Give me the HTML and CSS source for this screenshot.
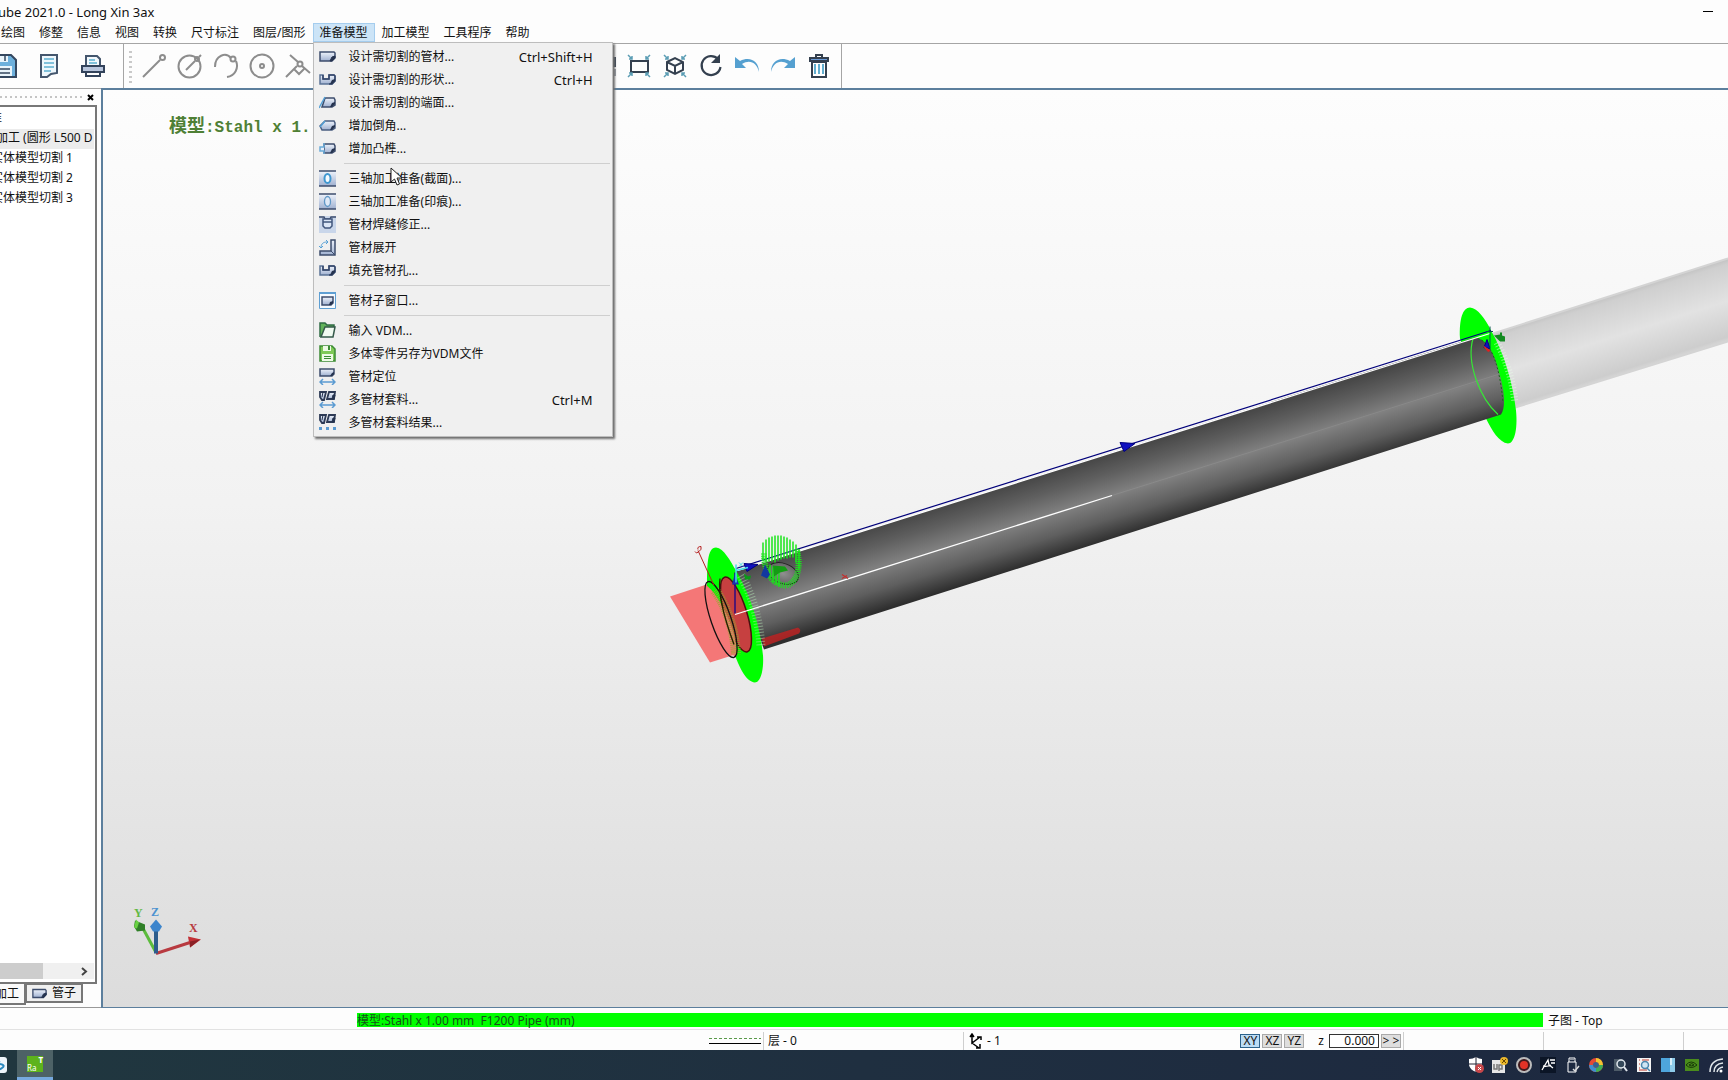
FILE: index.html
```html
<!DOCTYPE html>
<html lang="zh-CN">
<head>
<meta charset="utf-8">
<title>Tube 2021.0 - Long Xin 3ax</title>
<link rel="stylesheet" href="styles.css">
</head>
<body>
<svg class="defs" aria-hidden="true">
  <defs>
    <linearGradient id="steel" x1="0" y1="0" x2="0" y2="1"><stop offset="0" stop-color="#eef3fb"/><stop offset="1" stop-color="#9fb0d0"/></linearGradient>
    <symbol id="pipe" viewBox="0 0 17 17"><path d="M1 4h14l1 1v5l-3 3H1z" fill="url(#steel)" stroke="#3c4c6c" stroke-width="1.5"/><path d="M11 13l2-4 3-1v2l-3 3z" fill="#25334f" stroke="#25334f"/></symbol>
    <symbol id="shape" viewBox="0 0 17 17"><path d="M1 4h3v4h6V4h5l1 1v5l-3 3H1z" fill="url(#steel)" stroke="#5b7396" stroke-width="1.5"/><path d="M4 4v4h6V4h5l1 1v5l-3 3h-3" fill="none" stroke="#35466a" stroke-width="1.5"/><path d="M11 13l2-4 3-1v2l-3 3z" fill="#25334f"/></symbol>
    <symbol id="face" viewBox="0 0 17 17"><path d="M6 4h9l1 2v5l-3 2H3z" fill="url(#steel)" stroke="#3c4c6c" stroke-width="1.5"/><path d="M0 14L6 3" stroke="#55a0d5" stroke-width="1.5"/><path d="M11 13l2-4 3-1v2l-3 3z" fill="#25334f"/></symbol>
    <symbol id="chamfer" viewBox="0 0 17 17"><path d="M1 9l5-5h9l1 2v5l-3 2H3z" fill="url(#steel)" stroke="#4a5d80" stroke-width="1.5"/><path d="M1 10l5-6" stroke="#55a0d5" stroke-width="1.5"/><path d="M11 13l2-4 3-1v2l-3 3z" fill="#25334f"/></symbol>
    <symbol id="tenon" viewBox="0 0 17 17"><path d="M5 4h10l1 2v5l-3 2H5z" fill="url(#steel)" stroke="#3c4c6c" stroke-width="1.5"/><path d="M5 3v4H1v4h4v3" fill="#e4eefb" stroke="#6aaad8" stroke-width="1.5"/><path d="M11 13l2-4 3-1v2l-3 3z" fill="#25334f"/></symbol>
    <symbol id="section" viewBox="0 0 17 17"><path d="M0 1h17v15H0z" fill="url(#steel)"/><path d="M0 1h17M0 16h17" stroke="#3c4c6c" stroke-width="1.5"/><ellipse cx="8.500" cy="8.500" rx="3" ry="4.500" fill="#f4faff" stroke="#3f97d0" stroke-width="2"/></symbol>
    <symbol id="imprint" viewBox="0 0 17 17"><path d="M0 1h17v15H0z" fill="url(#steel)"/><path d="M0 1h17M0 16h17" stroke="#3c4c6c" stroke-width="1.500"/><ellipse cx="8.500" cy="8.500" rx="3" ry="5" fill="#dfe9f7" stroke="#5f97c6" stroke-width="1.300"/></symbol>
    <symbol id="weld" viewBox="0 0 17 17"><path d="M0 0h17v17H0z" fill="#c9d6ea"/><path d="M0 1h5l1 2h5l1-2h5" fill="none" stroke="#3c4c6c" stroke-width="1.500"/><path d="M4 3h9v7l-2 2H6l-2-2z" fill="#dbe6f6" stroke="#41577d" stroke-width="1.500"/><path d="M4 6h9" stroke="#41577d" stroke-width="1.500"/></symbol>
    <symbol id="unfold" viewBox="0 0 17 17"><path d="M12 1h4v15H1v-4h11z" fill="url(#steel)" stroke="#3c4c6c" stroke-width="1.500"/><path d="M12 12l4 4" stroke="#3c4c6c"/><path d="M2 9c0-4 2-6 6-6M0 7l2 2 2-2M7 1l2 2-2 2" fill="none" stroke="#55a0d5"/></symbol>
    <symbol id="subwin" viewBox="0 0 17 17"><path d="M.5.5h16v16H.5z" fill="#f5faff" stroke="#5e9fd3"/><path d="M0 0h17v2H0z" fill="#5e9fd3"/><path d="M3 5h11v6l-2 2H3z" fill="url(#steel)" stroke="#3c4c6c" stroke-width="1.500"/><path d="M10 13l1-3 3-1v2l-2 2z" fill="#25334f"/></symbol>
    <symbol id="folder" viewBox="0 0 17 17"><path d="M1 15V1h5l2 2h7v3" fill="#62b35a" stroke="#2f6b44" stroke-width="1.500"/><path d="M2 15L6 5h10l-2 10z" fill="#f1faf1" stroke="#35594a" stroke-width="1.500"/></symbol>
    <symbol id="vsave" viewBox="0 0 17 17"><path d="M1 1h12l3 3v12H1z" fill="#7fc957" stroke="#3c8b34" stroke-width="1.500"/><path d="M4 1h8v5H4zM3 9h11v7H3z" fill="#eefae6"/><path d="M9 1h2v4H9zM5 11h7v1H5zM5 13h7v1H5z" fill="#3c8b34"/></symbol>
    <symbol id="locate" viewBox="0 0 17 17"><path d="M1 1h14v5l-2 2H1z" fill="url(#steel)" stroke="#3c4c6c" stroke-width="1.500"/><path d="M11 8l2-3 2-1v2l-2 2z" fill="#25334f"/><path d="M1 14h15M4 11l-3 3 3 3M13 11l3 3-3 3" fill="none" stroke="#5b9bd2" stroke-width="1.500"/></symbol>
    <symbol id="pair" viewBox="0 0 17 10"><path d="M1 1h6L5 9H3L1 6zM10 1h6l-1 7H8z" fill="url(#steel)" stroke="#2d3a55" stroke-width="1.800"/><path d="M4 1L3 6M13 8l1-4h2l-1 4z" fill="#25334f" stroke="#25334f"/></symbol>
    <symbol id="nest" viewBox="0 0 17 17"><use href="#pair" width="17" height="10"/><path d="M1 14h15M4 11l-3 3 3 3M13 11l3 3-3 3" fill="none" stroke="#5b9bd2" stroke-width="1.500"/></symbol>
    <symbol id="nestres" viewBox="0 0 17 17"><use href="#pair" width="17" height="10"/><path d="M0 13h3v3H0zM7 13h3v3H7zM14 13h3v3h-3z" fill="#5b9bd2"/></symbol>
  </defs>
</svg>

<header class="titlebar">
  <span class="title">ube 2021.0 - Long Xin 3ax</span>
  <button class="minimize" aria-label="最小化"></button>
</header>

<nav class="menubar">
  <button>绘图</button><button>修整</button><button>信息</button><button>视图</button><button>转换</button><button>尺寸标注</button><button>图层/图形</button>
  <div class="menu-host">
    <button class="open" aria-expanded="true">准备模型</button>
    <div class="dropdown" role="menu">
      <button role="menuitem"><svg><use href="#pipe"/></svg><span>设计需切割的管材...</span><kbd>Ctrl+Shift+H</kbd></button>
      <button role="menuitem"><svg><use href="#shape"/></svg><span>设计需切割的形状...</span><kbd>Ctrl+H</kbd></button>
      <button role="menuitem"><svg><use href="#face"/></svg><span>设计需切割的端面...</span></button>
      <button role="menuitem"><svg><use href="#chamfer"/></svg><span>增加倒角...</span></button>
      <button role="menuitem"><svg><use href="#tenon"/></svg><span>增加凸榫...</span></button>
      <hr>
      <button role="menuitem"><svg><use href="#section"/></svg><span>三轴加工准备(截面)...</span></button>
      <button role="menuitem"><svg><use href="#imprint"/></svg><span>三轴加工准备(印痕)...</span></button>
      <button role="menuitem"><svg><use href="#weld"/></svg><span>管材焊缝修正...</span></button>
      <button role="menuitem"><svg><use href="#unfold"/></svg><span>管材展开</span></button>
      <button role="menuitem"><svg><use href="#shape"/></svg><span>填充管材孔...</span></button>
      <hr>
      <button role="menuitem"><svg><use href="#subwin"/></svg><span>管材子窗口...</span></button>
      <hr>
      <button role="menuitem"><svg><use href="#folder"/></svg><span>输入 VDM...</span></button>
      <button role="menuitem"><svg><use href="#vsave"/></svg><span>多体零件另存为VDM文件</span></button>
      <button role="menuitem"><svg><use href="#locate"/></svg><span>管材定位</span></button>
      <button role="menuitem"><svg><use href="#nest"/></svg><span>多管材套料...</span><kbd>Ctrl+M</kbd></button>
      <button role="menuitem"><svg><use href="#nestres"/></svg><span>多管材套料结果...</span></button>
      <svg class="cursor" viewBox="0 0 13 19"><path d="M1 1v14l3.500-3 2.500 6 2.500-1L7 11h5z" fill="#fff" stroke="#222"/></svg>
    </div>
  </div>
  <button>加工模型</button><button>工具程序</button><button>帮助</button>
</nav>

<div class="toolbar">
  <div class="tools files">
    <button aria-label="保存"><svg viewBox="0 0 26 26"><path d="M2 2h17l5 5v17H2z" fill="#6db0dc" stroke="#34475f" stroke-width="2"/><path d="M7 3h9v6H7zM5 13h15v10H5z" fill="#e9f4fb"/><path d="M13 3v5M7 16h11M7 20h11" stroke="#34475f" stroke-width="1.500"/></svg></button>
    <button aria-label="文档"><svg viewBox="0 0 26 26"><path d="M5 2h16v18l-6 1-4 3H5z" fill="#eef7fc" stroke="#44566d" stroke-width="2"/><path d="M8 6h10M8 10h10M8 14h10M8 18h7" stroke="#5eb0d0" stroke-width="1.500"/></svg></button>
    <button aria-label="打印"><svg viewBox="0 0 26 26"><path d="M6 13V3h11l3 3v7" fill="#f2f8fc" stroke="#44566d" stroke-width="2"/><path d="M9 7h6M9 10h8" stroke="#5eb0d0" stroke-width="1.500"/><path d="M2 13h22v6H2z" fill="#b9c6dd" stroke="#33435b" stroke-width="2"/><path d="M6 19h14v4H6z" fill="#fff" stroke="#33435b" stroke-width="2"/></svg></button>
  </div>
  <div class="grip"></div>
  <div class="tools draw">
    <button aria-label="直线"><svg viewBox="0 0 26 26"><path d="M2 24L19 7"/><circle cx="21.500" cy="4.500" r="2.500"/></svg></button>
    <button aria-label="圆"><svg viewBox="0 0 26 26"><circle cx="12.500" cy="13.500" r="11"/><path d="M9 17l9-9"/><circle cx="20" cy="6" r="2"/><path d="M22 4l2-2"/></svg></button>
    <button aria-label="圆弧"><svg viewBox="0 0 26 26"><path d="M2 14C2 2 13-1 18 5M23 8c3 7-1 15-9 16"/><circle cx="20" cy="6" r="2.500"/></svg></button>
    <button aria-label="圆心"><svg viewBox="0 0 26 26"><circle cx="13" cy="13" r="11.500"/><circle cx="13" cy="13" r="2"/></svg></button>
    <button aria-label="垂足"><svg viewBox="0 0 26 26"><path d="M5 2l8 7M17 13l8 7M1 24l11-11M9 16l5 5 5-5"/><circle cx="15" cy="11" r="2.500"/></svg></button>
  </div>
  <div class="tools view">
    <button aria-label="视图"><svg viewBox="0 0 26 26"><path d="M3 4h23v10H3z" fill="#34404f"/><path d="M25 16v7" stroke="#34404f"/></svg></button>
    <button aria-label="全部缩放"><svg viewBox="0 0 26 26"><path d="M5 8h17v11H5z" fill="none" stroke="#34404f" stroke-width="2"/><path d="M2 2l4 4M6 3v3H3M24 2l-4 4M20 3v3h3M2 24l4-4M3 20h3v3M24 24l-4-4M23 20h-3v3" fill="none" stroke="#5b9db4" stroke-width="1.500"/></svg></button>
    <button aria-label="等轴测"><svg viewBox="0 0 26 26"><path d="M5 9l8-4 8 4v8l-8 4-8-4zM5 9l8 4 8-4M13 13v8" fill="none" stroke="#34404f" stroke-width="2"/><path d="M2 2l4 4M6 3v3H3M24 2l-4 4M20 3v3h3M2 24l4-4M3 20h3v3M24 24l-4-4M23 20h-3v3" fill="none" stroke="#5b9db4" stroke-width="1.500"/></svg></button>
    <button aria-label="刷新"><svg viewBox="0 0 26 26"><path d="M20 6A9.500 9.500 0 1 0 22.500 14" fill="none" stroke="#34404f" stroke-width="2.200"/><path d="M22 1v9h-9z" fill="#34404f"/></svg></button>
    <button aria-label="撤销"><svg viewBox="0 0 26 26"><path d="M1 4v11h11L8 11c8-5 15-1 17 8C25 8 16 3 6 8z" fill="#55a0d0"/></svg></button>
    <button aria-label="重做"><svg viewBox="0 0 26 26"><path d="M25 4v11H14l4-4C10 6 3 10 1 19 1 8 10 3 20 8z" fill="#55a0d0"/></svg></button>
    <button aria-label="删除"><svg viewBox="0 0 26 26"><path d="M4 5h18v3H4z" fill="#6c9bd8" stroke="#34404f" stroke-width="2"/><path d="M10 4V2h6v2" fill="none" stroke="#34404f" stroke-width="2"/><path d="M6 9h14v15H6z" fill="#fff" stroke="#34404f" stroke-width="2"/><path d="M9 11v10M13 11v10M17 11v10" stroke="#62aecf" stroke-width="2"/></svg></button>
  </div>
</div>

<main class="workspace">
  <aside class="sidebar">
    <div class="panel-head"><span class="dots"></span><button aria-label="关闭"><svg viewBox="0 0 7 7"><path d="M1 1l5 5M6 1L1 6" stroke="#000" stroke-width="2"/></svg></button></div>
    <div class="tree">
      <ul>
        <li>准</li>
        <li class="sel">加工 (圆形 L500 D</li>
        <li>实体模型切割 1</li>
        <li>实体模型切割 2</li>
        <li>实体模型切割 3</li>
      </ul>
      <div class="hscroll"><div class="thumb"></div><svg viewBox="0 0 7 9"><path d="M1 1l4 3.500L1 8" fill="none" stroke="#444" stroke-width="2"/></svg></div>
    </div>
    <div class="tabs"><button class="active">加工</button><button><svg><use href="#pipe"/></svg>管子</button></div>
  </aside>

  <section class="viewport">
    <p class="model-label"><span>模型</span>:Stahl x 1.</p>
    <svg class="scene" viewBox="103 90 1625 916" preserveAspectRatio="xMidYMid meet">
      <defs>
        <linearGradient id="dark" gradientUnits="userSpaceOnUse" x1="1140" y1="445" x2="1164" y2="523"><stop offset="0" stop-color="#484848"/><stop offset=".22" stop-color="#5f5f5f"/><stop offset=".48" stop-color="#808080"/><stop offset=".75" stop-color="#5e5e5e"/><stop offset="1" stop-color="#2e2e2e"/></linearGradient>
        <linearGradient id="light" gradientUnits="userSpaceOnUse" x1="1600" y1="299" x2="1624" y2="375"><stop offset="0" stop-color="#c4c4c4"/><stop offset=".06" stop-color="#cfcfcf"/><stop offset=".5" stop-color="#e2e2e2"/><stop offset=".93" stop-color="#cdcdcd"/><stop offset="1" stop-color="#dadada"/></linearGradient>
        <radialGradient id="holeShade"><stop offset="0" stop-color="#909090"/><stop offset="1" stop-color="#666"/></radialGradient>
      </defs>
      <path d="M1490 334L1728 258V341L1512 408z" fill="url(#light)"/>
      <path d="M1490 334L1728 258M1512 408L1728 341" stroke="#d4d4d4" stroke-width="2"/>
      <path d="M1460 338C1459 318 1463 307 1470 307C1478 308 1485 318 1491 330C1504 352 1513 383 1516 410C1518 430 1514 443 1508 443C1499 442 1492 430 1486 418z" fill="#0f0"/>
      <path d="M1497 342Q1511 368 1515 402" fill="none" stroke="#eaffea" stroke-width="7" stroke-dasharray="1 2" opacity=".5"/>
      <path d="M735 571L1475 337C1490 339 1497 361 1501 379C1505 396 1505 408 1501 414L764 649z" fill="url(#dark)"/>
      <path d="M1478 338C1492 342 1500 368 1503 402" fill="none" stroke="#176b17" stroke-dasharray="2 2"/>
      <path d="M1112 495L1498 374" stroke="#999" opacity=".4"/>
      <path d="M1473 338C1466 362 1480 398 1498 414" fill="none" stroke="#35e835" stroke-width="1.200"/>
      <path d="M738 570L1490 333" stroke="#fff" stroke-width="1.300"/>
      <path d="M736 568L1491 330" stroke="#00007a" stroke-width="1.200"/>
      <path d="M1120 442l15 1-11 8zM744 563l14 1-11 7zM1484 347l3-8 3 9z" fill="#1010c0" stroke="#000080"/>
      <path d="M1490 326v22M1487 331h6" stroke="#0a5050"/>
      <path d="M1484 346l6 4-2 1z" fill="#e02020" stroke="#e02020"/>
      <path d="M1494 335l6-1v-2h2v3l3 1v5h-5z" fill="#128a20"/>

      <path d="M670 596L728 577L748 650L710 662z" fill="#f47777"/>
      <path d="M762 638L798 627q4 2 1 6L764 646z" fill="#c32222" opacity=".8"/>
      <path d="M707 590C707 565 707 547 716 547C724 548 730 560 736 570C751 596 760 625 763 655C764 671 760 682 755 682C746 681 740 668 735 655C724 635 712 610 707 590z" fill="#0f0"/>
      <path d="M741 575Q758 605 761 646" fill="none" stroke="#b5e5b5" stroke-width="9" stroke-dasharray="1 2" opacity=".5"/>
      <ellipse cx="736" cy="614" rx="11" ry="39" transform="rotate(-17 736 614)" fill="#c64040" stroke="#4a1010" stroke-width="1.500"/>
      <path d="M705 584C712 588 722 602 730 622C736 638 738 652 736 656C722 652 706 620 705 584z" fill="#f47777"/>
      <path d="M715 590C726 604 735 630 736 654" fill="none" stroke="#93a72e" stroke-width="10" stroke-dasharray="1 1" opacity=".8"/>
      <ellipse cx="721" cy="619" rx="10" ry="40" transform="rotate(-19 721 619)" fill="none" stroke="#111" stroke-width="1.300"/>
      <path d="M720 578q-3 20 14 66" fill="none" stroke="#220" stroke-width="1.300"/>
      <path d="M714 585L698 550M695 551q1 3 4 0q3-2 2-5q-4 0-3 3" fill="none" stroke="#b52020"/>
      <path d="M735 613V572" stroke="#2a0a80" stroke-width="1.500"/>
      <path d="M732 584l3-11 4 11z" fill="#1733b0"/>
      <path d="M736 582V564M736 570l12-3" stroke="#4bdde8" stroke-width="1.500"/>
      <path d="M739 562l4 4M743 562l-4 4" stroke="#4bdde8"/>
      <path d="M744 573l4 3 3-1-1 4h-5z" fill="#0a9a18"/>
      <path d="M735 614L1112 495" stroke="#fff" stroke-width="1.300"/>
      <path d="M842 574l6 4M842 578l5-3" stroke="#c03030" stroke-width="1.300"/>

      <ellipse cx="783" cy="573" rx="16" ry="10" transform="rotate(20 783 573)" fill="url(#holeShade)" stroke="#222"/>
      <path d="M764 553C764 575 775 585 786 585C798 582 801 566 797 549" fill="none" stroke="#1be41b" stroke-width="6" stroke-dasharray="1 1"/>
      <path d="M763 542v18M766 539v22M769 537v24M772 536v25M775 535v27M778 535v25M781 535v24M784 536v22M787 537v21M790 539v18M793 541v16M796 544v18M799 549v20M770 564v14M773 566v16M776 568v16M779 572v14" stroke="#1be41b" stroke-width="1.500"/>
      <path d="M773 565l12 1 3 4-8 2-6 4z" fill="#149c14"/>
      <path d="M761 575l4-11 5 10-3 4z" fill="#1238a0"/>

      <g class="triad">
        <path d="M156 952L143 928" stroke="#5cbc3c" stroke-width="3"/><path d="M135 920l10 4v6l-8 1-3-5z" fill="#2f7f27"/><path d="M136 919l3 3-2 6-3-1z" fill="#69d143"/>
        <path d="M156 953L190 942" stroke="#b83a40" stroke-width="3"/><path d="M188 936l13 3-11 8z" fill="#c23036"/><path d="M190 941l10-2-10 8z" fill="#8a2026"/>
        <path d="M156 953V929" stroke="#2c5c8c" stroke-width="4"/><path d="M156 919l6 7-3 5h-6l-3-5z" fill="#3d85cc"/>
        <text x="134" y="916" fill="#62b846">Y</text><text x="151" y="915" fill="#4c92d0">Z</text><text x="189" y="931" fill="#b83a40">X</text>
      </g>
    </svg>
  </section>
</main>

<footer class="status">
  <div class="status-row first"><span class="progress">模型:Stahl x 1.00 mm  F1200 Pipe (mm)</span><span class="subview">子图 - Top</span></div>
  <div class="status-row second">
    <div class="cell line-style"><svg viewBox="0 0 52 10"><path d="M0 2.500h52" stroke="#5a9a4a" stroke-dasharray="3 2"/><path d="M0 7.500h52" stroke="#000"/></svg></div>
    <div class="cell layer">层 - 0</div>
    <div class="cell ucs"><svg viewBox="0 0 14 16"><path d="M3 2v8l8-6M3 10l7 5M1 4l2-3 2 3M8 4h4v3M11 11v4H7" fill="none" stroke="#000" stroke-width="1.500"/></svg>- 1</div>
    <div class="cell planes">
      <button class="on">XY</button><button>XZ</button><button>YZ</button>
      <label for="zval">z</label><input id="zval" value="0.000"><button>&gt; &gt;</button>
    </div>
    <div class="cell blank-a"></div><div class="cell blank-b"></div>
  </div>
</footer>

<div class="taskbar">
  <button class="app edge" aria-label="应用"><svg viewBox="0 0 16 16"><rect width="16" height="16" rx="3" fill="#eef6fb"/><path d="M9 4q-4 2-3 6t5 1-2-4" fill="none" stroke="#2b8ac0" stroke-width="2"/></svg></button>
  <button class="app current"><span class="logo"><b>T</b><i>Ra</i></span></button>
  <div class="tray">
    <svg viewBox="0 0 16 16"><path d="M1 2q4 0 7-2 3 2 6 2v6q0 5-6 7-6-2-7-7z" fill="#fff"/><path d="M8 0v15M1 7h13" stroke="#223"/><circle cx="11.500" cy="11.500" r="4.500" fill="#c8474a"/><path d="M10 10l3 3M13 10l-3 3" stroke="#fff"/></svg>
    <svg viewBox="0 0 16 16"><path d="M0 3h13v13H0z" fill="#e6e6e6"/><path d="M2 7v5h3V7M7 14V8h3v4H7" fill="none" stroke="#777" stroke-width="1.500"/><circle cx="12" cy="4" r="4" fill="#eab82c"/><path d="M10 2l4 4M14 2l-4 4" stroke="#6a4a00"/></svg>
    <svg viewBox="0 0 16 16"><circle cx="8" cy="8" r="7" fill="#40191c" stroke="#bcbcbc" stroke-width="2"/><circle cx="8" cy="8" r="4" fill="#e23226"/></svg>
    <svg viewBox="0 0 16 16"><path d="M0 0h16v16H0z" fill="#0b1526"/><path d="M2 13L8 3l1 5 4 3M3 9q4 1 8-1M10 3h5M11 6h4" fill="none" stroke="#fff" stroke-width="1.300"/></svg>
    <svg viewBox="0 0 16 16"><path d="M5 5V1h6v4M4 5h8v10H4zM7 2v1M9 2v1" fill="none" stroke="#fff"/><path d="M9 12l2 2 4-5" fill="none" stroke="#ddd" stroke-width="1.500"/></svg>
    <svg viewBox="0 0 16 16"><circle cx="8" cy="8" r="5" fill="#38628e" stroke="#e44a35" stroke-width="4"/><path d="M3 8a5 5 0 0 0 5 5" fill="none" stroke="#3f8fd0" stroke-width="4"/><path d="M8 3a5 5 0 0 1 5 5" fill="none" stroke="#f4c430" stroke-width="4"/><path d="M13 8a5 5 0 0 1-5 5" fill="none" stroke="#3fae55" stroke-width="4"/></svg>
    <svg viewBox="0 0 16 16"><path d="M2 2h8v12H2z" fill="#4d5b68"/><circle cx="9" cy="7" r="4" fill="#34485a" stroke="#e2e8ee" stroke-width="1.500"/><path d="M12 10l3 4" stroke="#e2e8ee" stroke-width="2"/></svg>
    <svg viewBox="0 0 16 16"><path d="M1 1h14v14H1z" fill="#f4f4f4"/><path d="M3 3h1M6 3h7M3 7h1M3 11h1M3 13h8" stroke="#c0392b"/><circle cx="9" cy="8" r="3.500" fill="#cfe6f4" stroke="#4a86ad" stroke-width="1.500"/><path d="M11 11l3 3" stroke="#4a86ad" stroke-width="1.500"/></svg>
    <svg viewBox="0 0 16 16"><path d="M1 1h14v14H1z" fill="#4ea5dc"/><path d="M10 1h5v14h-5z" fill="#8ecbea"/><path d="M10 1h2v7h-2z" fill="#d9effa"/></svg>
    <svg viewBox="0 0 16 16"><path d="M1 2h14v12H1z" fill="#4a8c1c"/><path d="M2 8q5-6 11 0-6 5-11 0zM5 8q3-3 5 0-3 2-5 0" fill="none" stroke="#183a08"/></svg>
    <svg viewBox="0 0 16 16"><path d="M2 15Q2 3 15 2M6 15Q6 7 15 6M9 15q1-4 6-5" fill="none" stroke="#e0e6ea" stroke-width="1.500"/><circle cx="13" cy="14" r="1.500" fill="#fff"/></svg>
  </div>
</div>
</body>
</html>
```
FILE: styles.css
```css
* { box-sizing: border-box; }
body {
  margin: 0;
  height: 100vh;
  display: flex;
  flex-direction: column;
  overflow: hidden;
  background: #fdfdfd;
  color: #111;
  font: 12px/16px "Noto Sans", "Noto Sans CJK SC", sans-serif;
}
button, input, kbd { font: inherit; color: inherit; }
button { border: 0; padding: 0; background: none; }
svg { display: block; flex: none; }
.defs { position: absolute; width: 0; height: 0; }

.titlebar { display: flex; justify-content: space-between; align-items: center; height: 23px; padding-right: 14px; }
.title { font-size: 13px; margin-left: -2px; }
.minimize { width: 12px; height: 12px; display: grid; place-items: center; }
.minimize::before { content: ""; width: 10px; height: 1px; background: #000; }

.menubar { display: flex; height: 20px; margin-left: -6px; }
.menubar > button, .menu-host > button { padding: 0 7px; height: 19px; white-space: nowrap; }
.menu-host { position: relative; }
.menu-host > .open { background: #cce4f7; box-shadow: inset 0 0 0 1px #a5cdee; }

.dropdown {
  position: absolute;
  z-index: 5;
  top: 19px;
  left: 0;
  width: 300px;
  padding: 2px;
  background: #f0f0f0;
  border: 1px solid #bdbdbd;
  box-shadow: 2px 2px 2px #6e6e6e;
}
.dropdown > button { display: flex; align-items: center; gap: 13px; width: 100%; height: 23px; padding: 0 17px 0 3px; text-align: left; }
.dropdown > button svg { width: 17px; height: 17px; }
.dropdown > button span { flex: 1; }
.dropdown kbd { font-size: 13px; }
.dropdown hr { height: 1px; margin: 3px 0 3px 28px; border: 0; background: #cfcfcf; }
.dropdown .cursor { position: absolute; left: 76px; top: 124px; width: 13px; height: 19px; }

.toolbar { display: flex; align-items: stretch; height: 45px; border-top: 1px solid #a5a5a5; }
.tools { display: flex; align-items: center; }
.tools svg { width: 26px; height: 26px; }
.files { gap: 18px; width: 124px; padding-right: 17px; border-right: 1px solid #a5a5a5; justify-content: flex-end; }
.grip { width: 3px; margin: 7px 9px 4px 5px; background: repeating-linear-gradient(#c9c9c9 0 2px, transparent 2px 5px); }
.draw { gap: 10px; }
.draw svg { fill: none; stroke: #8d8d8d; stroke-width: 2; }
.view { gap: 10px; margin-left: 279px; padding-right: 9px; border-right: 1px solid #a5a5a5; }

.workspace { flex: 1; min-height: 0; display: flex; }
.sidebar { width: 101px; display: flex; flex-direction: column; border-top: 1px solid #a5a5a5; border-bottom: 1px solid #999; padding-bottom: 2px; }
.panel-head { display: flex; align-items: center; gap: 4px; height: 16px; padding-right: 7px; }
.dots { flex: 1; height: 2px; background: repeating-linear-gradient(90deg, #c4c4c4 0 2px, transparent 2px 5px); }
.panel-head svg { width: 7px; height: 7px; }
.tree { flex: 1; min-height: 0; width: 97px; display: flex; flex-direction: column; border: solid #777; border-width: 2px 2px 2px 0; background: #fff; padding: 0 1px 3px 0; }
.tree ul { flex: 1; list-style: none; margin: 0; padding: 2px 0 0; overflow: hidden; }
.tree li { height: 20px; line-height: 18px; margin-left: -9px; white-space: nowrap; }
.tree li:first-child { margin-left: -10px; }
.tree li.sel { background: #ececec; padding-left: 5px; }
.hscroll { display: flex; align-items: center; justify-content: space-between; height: 16px; background: #f0f0f0; padding-right: 6px; }
.hscroll .thumb { width: 43px; height: 100%; background: #cdcdcd; }
.hscroll svg { width: 7px; height: 9px; }
.tabs { display: flex; align-items: flex-start; height: 21px; margin-left: -11px; }
.tabs button { display: flex; align-items: center; gap: 5px; height: 19px; padding: 0 5px; border: solid #777; border-width: 1px 2px 2px 1px; background: #f0f0f0; white-space: nowrap; }
.tabs .active { height: 21px; border-top: 0; background: #fafafa; }
.tabs svg { width: 15px; height: 15px; }

.viewport {
  position: relative;
  flex: 1;
  border: solid #5c7f9d;
  border-width: 2px 0 1px 2px;
  background: linear-gradient(#fdfdfd, #f2f2f2 45%, #dcdcdc);
  overflow: hidden;
}
.scene { width: 100%; height: 100%; }
.triad text { font: bold 12px "Liberation Serif", serif; }
.model-label { position: absolute; left: 66px; top: 22px; margin: 0; color: #4f8035; font: bold 16px/24px "Liberation Mono", "Noto Sans CJK SC", monospace; white-space: pre; }
.model-label span { font-size: 18px; font-family: "Noto Sans CJK SC", sans-serif; }

.status-row { display: flex; align-items: stretch; }
.first { height: 22px; padding: 5px 0 2px 357px; border-bottom: 1px solid #e2e2e2; }
.progress { flex: 1; background: #0f0; color: #17501a; line-height: 15px; white-space: pre; }
.subview { width: 185px; padding-left: 5px; line-height: 15px; }
.second { height: 20px; padding: 2px 44px 0 0; justify-content: flex-end; }
.cell { display: flex; align-items: center; border-right: 1px solid #cfcfcf; white-space: nowrap; }
.line-style { padding-right: 2px; }
.line-style svg { width: 52px; height: 10px; }
.layer { width: 200px; padding-left: 4px; }
.ucs { width: 36px; gap: 4px; padding-left: 5px; border: 0; }
.ucs svg { width: 14px; height: 16px; }
.planes { width: 404px; justify-content: flex-end; gap: 2px; padding-right: 2px; }
.planes button { height: 14px; width: 20px; line-height: 12px; background: #dedede; border: 1px solid #a9a9a9; }
.planes .on { background: #bcdcf4; border-color: #2c628b; }
.planes label { margin: 0 3px 0 12px; }
.planes input { width: 50px; height: 14px; padding: 0 3px; border: 1px solid #333; background: #fff; text-align: right; }
.blank-a, .blank-b { width: 140px; }

.taskbar { display: flex; height: 30px; background: linear-gradient(90deg, #20373f, #1f2f40 50%, #1d2840); }
.app { display: grid; place-items: center; height: 30px; }
.edge { width: 16px; margin: 0 10px 0 -9px; }
.edge svg { width: 16px; height: 16px; }
.current { width: 36px; background: #4d6266; border-bottom: 3px solid #76a9de; }
.logo { position: relative; display: block; width: 16px; height: 16px; background: #5db31c; color: #fff; font-size: 8px; line-height: 8px; }
.logo b { position: absolute; right: 0; top: 0; }
.logo i { position: absolute; left: 0; bottom: 0; font-style: normal; }
.tray { display: flex; align-items: center; gap: 8px; margin-left: auto; padding-right: 4px; }
.tray svg { width: 16px; height: 16px; }
```
